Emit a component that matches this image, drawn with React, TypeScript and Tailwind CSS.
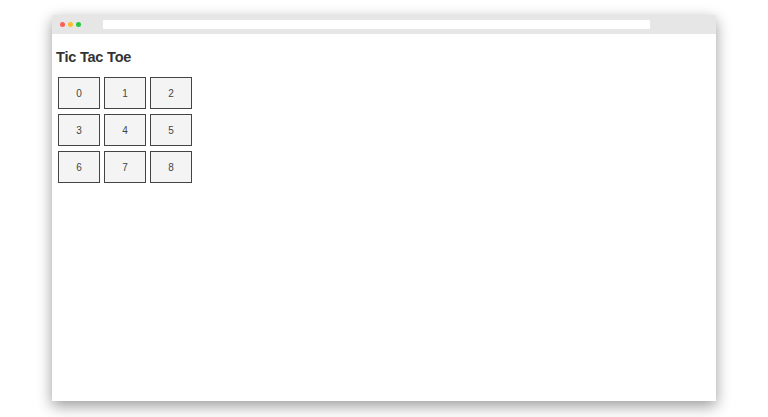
const cells = [0, 1, 2, 3, 4, 5, 6, 7, 8];

export default function App() {
  return (
    <div className="w-[768px] h-[417px] bg-white pt-[15px] pl-[52px] overflow-hidden" style={{ fontFamily: '"Liberation Sans", Arial, sans-serif' }}>
      <div className="w-[664px] h-[386px] bg-white shadow-[0_5px_14px_rgba(0,0,0,0.4)] flex flex-col">
        <div className="h-[19px] bg-[#e6e6e6] flex items-center pl-[8px] gap-[3px] shrink-0">
          <span className="w-[5px] h-[5px] rounded-full bg-[#ff5f57]" />
          <span className="w-[5px] h-[5px] rounded-full bg-[#febc2e]" />
          <span className="w-[5px] h-[5px] rounded-full bg-[#28c840]" />
          <div className="ml-[19px] w-[547px] h-[9px] bg-white rounded-[1px]" />
        </div>
        <div className="pl-[4px] pt-[14px]">
          <h1 className="text-[14.5px] font-bold text-[#333] leading-[18px] tracking-[-0.2px]">Tic Tac Toe</h1>
          <div className="grid grid-cols-[repeat(3,42px)] gap-x-[4px] gap-y-[5px] mt-[11px] ml-[2px]">
            {cells.map((c) => (
              <button
                key={c}
                className="h-[32px] bg-[#f4f4f4] border border-[#444] text-[10px] text-[#444] flex items-center justify-center"
              >
                {c}
              </button>
            ))}
          </div>
        </div>
      </div>
    </div>
  );
}
